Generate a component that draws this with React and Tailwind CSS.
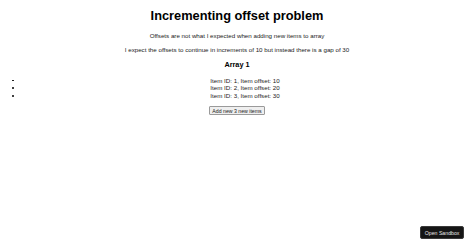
import React, { useState } from 'react';

const App = () => {
    const [items, setItems] = useState([
        { id: 1, offset: 10 },
        { id: 2, offset: 20 },
        { id: 3, offset: 30 },
    ]);

    const addItems = () => {
        const last = items.length;
        const next = [1, 2, 3].map((n) => ({ id: last + n, offset: (last + n) * 10 + 30 }));
        setItems([...items, ...next]);
    };

    return (
        <div className="min-h-[248px] bg-white text-center text-[#1a1a1a] font-['Liberation_Sans',Arial,sans-serif] text-[6.2px] leading-[7.4px]">
            <h1 className="pt-[8.6px] text-[12.8px] leading-[14.7px] font-bold text-black">Incrementing offset problem</h1>
            <p className="mt-[8.6px]">Offsets are not what I expected when adding new items to array</p>
            <p className="mt-[6.4px]">
                I expect the offsets to continue in increments of 10 but instead there is a gap of 30
            </p>
            <h3 className="mt-[7.5px] text-[7.3px] leading-[8.6px] font-bold text-black">Array 1</h3>
            <ul className="mt-[7.6px] pl-[16px] leading-[7.6px]">
                {items.map((item) => (
                    <li key={item.id} className="relative">
                        <span className="absolute left-[-3.8px] top-[3.1px] h-[1.5px] w-[1.5px] rounded-full bg-black" />
                        Item ID: {item.id}, Item offset: {item.offset}
                    </li>
                ))}
            </ul>
            <div className="mt-[6.8px]">
                <button
                    onClick={addItems}
                    className="rounded-[1px] border border-[#9a9a9a] bg-[#efefef] px-[2.4px] py-[0.3px] text-[5.2px] leading-[6px] font-['Liberation_Sans',Arial,sans-serif]"
                >
                    Add new 3 new items
                </button>
            </div>

            {/* sandbox badge */}
            <div className="fixed right-[10px] bottom-[9px] rounded-[2px] border border-[#3a3a3a] bg-[#151515] px-[3.6px] py-[2.4px] text-[5.2px] leading-[6px] text-[#e8e8e8]">
                Open Sandbox
            </div>
        </div>
    );
};

export default App;
